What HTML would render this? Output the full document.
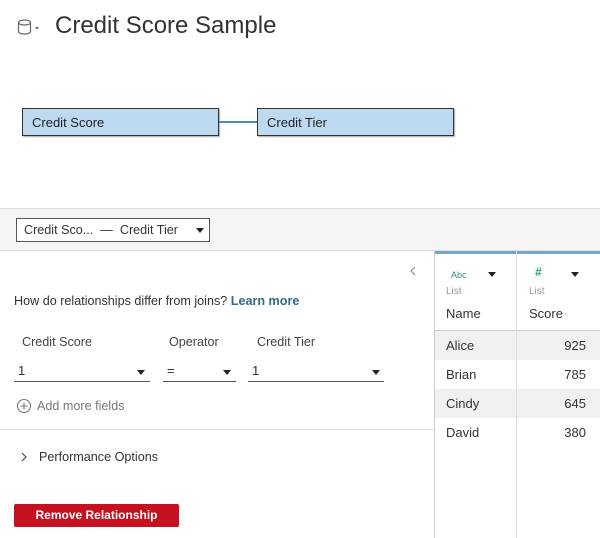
<!DOCTYPE html>
<html><head><meta charset="utf-8"><style>
*{margin:0;padding:0;box-sizing:border-box}
body{width:600px;height:538px;background:#fff;font-family:"Liberation Sans",Arial,sans-serif;color:#333;position:relative;overflow:hidden}
.a{position:absolute;white-space:nowrap}
.box{position:absolute;height:28px;background:#bcd9f0;border:1px solid #333;font-size:13px;color:#222;padding:6px 0 0 9px;box-shadow:1px 1px 1px #aaa}
.lbl{font-size:12.6px;color:#444}
.sel{position:absolute;border-bottom:1px solid #555;height:22px;font-size:13px;padding:3px 0 0 4px}
.tri{position:absolute;width:0;height:0;border-left:4px solid transparent;border-right:4px solid transparent;border-top:5px solid #222}
.cell{position:absolute;font-size:13px;color:#333}
</style></head><body>
<svg class="a" style="left:17px;top:19px" width="26" height="16"><ellipse cx="7.5" cy="3.5" rx="6" ry="2.5" fill="none" stroke="#666" stroke-width="1.2"/><path d="M1.5 3.5V12.5A6 2.5 0 0 0 13.5 12.5V3.5" fill="none" stroke="#666" stroke-width="1.2"/><path d="M18 8h4l-2 2.5z" fill="#666"/></svg>
<div class="a" style="left:55px;top:12px;font-size:24px;color:#333">Credit Score Sample</div>

<div class="box" style="left:22px;top:108px;width:197px">Credit Score</div>
<div class="a" style="left:219px;top:121px;width:38px;height:2px;background:#4a8cb6"></div>
<div class="box" style="left:257px;top:108px;width:197px">Credit Tier</div>

<div class="a" style="left:0;top:208px;width:600px;height:43px;background:#f5f5f5;border-top:1px solid #ddd;border-bottom:1px solid #ddd"></div>
<div class="a" style="left:16px;top:218px;width:194px;height:24px;border:1px solid #555;background:#fff;font-size:12.6px;padding:4px 0 0 7px;color:#333">Credit Sco... &nbsp;— &nbsp;Credit Tier</div>
<div class="tri" style="left:196px;top:228px"></div>

<svg class="a" style="left:409px;top:266px" width="8" height="10"><path d="M6 1L2 5l4 4" fill="none" stroke="#888" stroke-width="1.1"/></svg>
<div class="a" style="left:14px;top:294px;font-size:12.6px;color:#333">How do relationships differ from joins? <b style="color:#2e6b8e;font-weight:bold">Learn more</b></div>

<div class="a lbl" style="left:22px;top:335px">Credit Score</div>
<div class="a lbl" style="left:169px;top:335px">Operator</div>
<div class="a lbl" style="left:257px;top:335px">Credit Tier</div>
<div class="sel" style="left:14px;top:360px;width:136px">1</div><div class="tri" style="left:137px;top:370px"></div>
<div class="sel" style="left:163px;top:360px;width:73px">=</div><div class="tri" style="left:223px;top:370px"></div>
<div class="sel" style="left:248px;top:360px;width:136px">1</div><div class="tri" style="left:372px;top:370px"></div>

<svg class="a" style="left:16px;top:398px" width="16" height="16"><circle cx="8" cy="8" r="6.5" fill="none" stroke="#777" stroke-width="1.1"/><path d="M8 4.5v7M4.5 8h7" stroke="#777" stroke-width="1.1"/></svg>
<div class="a" style="left:37px;top:399px;font-size:12.6px;color:#777">Add more fields</div>
<div class="a" style="left:0;top:429px;width:434px;height:1px;background:#e2e2e2"></div>

<svg class="a" style="left:20px;top:452px" width="8" height="10"><path d="M2 1l4 4-4 4" fill="none" stroke="#444" stroke-width="1.1"/></svg>
<div class="a" style="left:39px;top:450px;font-size:12.6px;color:#333">Performance Options</div>

<div class="a" style="left:14px;top:504px;width:165px;height:23px;background:#c4101f;border-radius:2px;color:#fff;font-size:12px;font-weight:bold;text-align:center;line-height:23px">Remove Relationship</div>

<div class="a" style="left:434px;top:251px;width:1px;height:287px;background:#ccc"></div>
<div class="a" style="left:435px;top:251px;width:165px;height:3px;background:#7aa4c4"></div>
<div class="a" style="left:516px;top:251px;width:1px;height:287px;background:#ddd"></div>
<div class="a" style="left:451px;top:270px;font-size:9px;color:#2e8a8a">Abc</div>
<div class="tri" style="left:488px;top:272px"></div>
<div class="a" style="left:535px;top:265px;font-size:12px;color:#2aa37a;font-weight:bold">#</div>
<div class="tri" style="left:571px;top:272px"></div>
<div class="a" style="left:446px;top:286px;font-size:10px;color:#999">List</div>
<div class="a" style="left:529px;top:286px;font-size:10px;color:#999">List</div>
<div class="a" style="left:446px;top:306px;font-size:13px;color:#333">Name</div>
<div class="a" style="left:529px;top:306px;font-size:13px;color:#333">Score</div>
<div class="a" style="left:435px;top:330px;width:165px;height:1px;background:#ccc"></div>
<div class="a" style="left:435px;top:331px;width:165px;height:29px;background:#f0f0f0"></div>
<div class="a" style="left:435px;top:389px;width:165px;height:29px;background:#f0f0f0"></div>
<div class="a" style="left:516px;top:331px;width:1px;height:207px;background:#ddd"></div>
<div class="cell" style="left:446px;top:338px">Alice</div><div class="cell" style="right:14px;top:338px">925</div>
<div class="cell" style="left:446px;top:367px">Brian</div><div class="cell" style="right:14px;top:367px">785</div>
<div class="cell" style="left:446px;top:396px">Cindy</div><div class="cell" style="right:14px;top:396px">645</div>
<div class="cell" style="left:446px;top:425px">David</div><div class="cell" style="right:14px;top:425px">380</div>
</body></html>
